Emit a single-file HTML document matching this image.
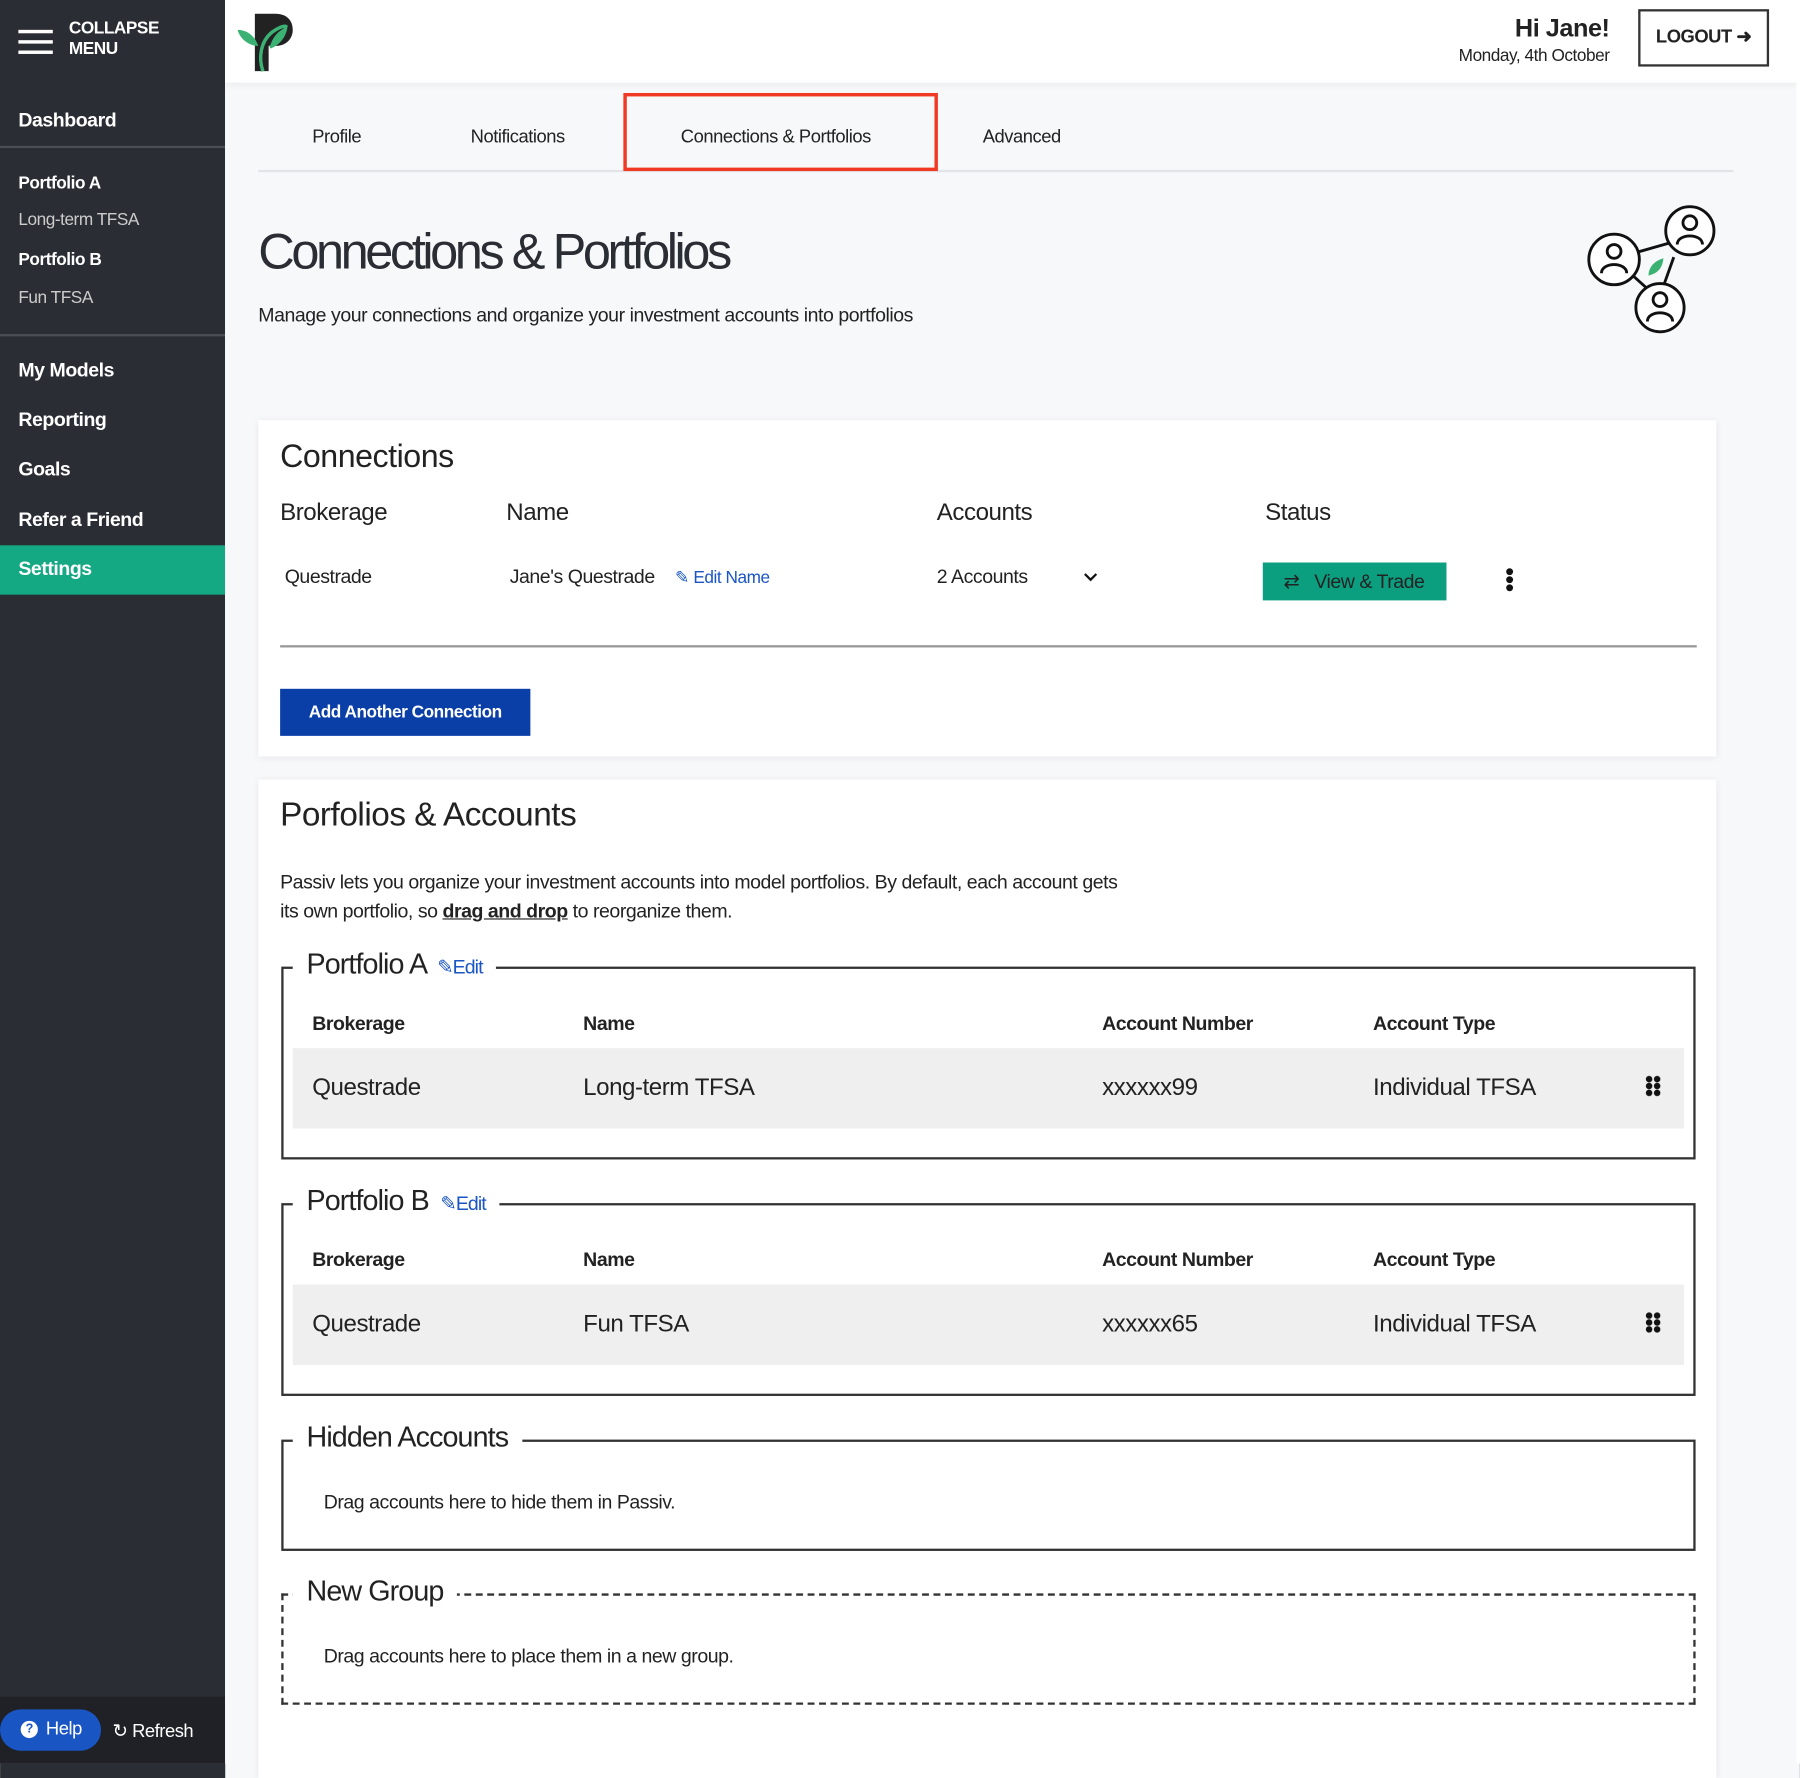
<!DOCTYPE html>
<html><head><meta charset="utf-8"><style>
*{box-sizing:border-box;margin:0;padding:0}
html,body{width:1800px;height:1763px;overflow:hidden;background:linear-gradient(90deg,#2a2d33 0,#2a2d33 225px,#f7f8fa 225px)}
#w{position:absolute;left:0;top:0;width:1568px;height:1536px;transform:scale(1.148);transform-origin:0 0;font-family:"Liberation Sans",sans-serif;color:#222;letter-spacing:-0.4px;background:#f7f8fa}
.a{position:absolute;white-space:nowrap}
#side{position:absolute;left:0;top:0;width:196px;height:1536px;background:#2a2d33;color:#fff}
.sb{font-weight:bold;font-size:17px}
.hr{position:absolute;left:0;width:196px;height:2px;background:#4a4e55}
.card{position:absolute;left:225px;width:1270px;background:#fff;box-shadow:0 1px 6px rgba(0,0,0,.08)}
.fs{position:absolute;left:245px;width:1232px;border:2px solid #333}
.lg{position:absolute;background:#fff;padding:0 12px;font-size:25px;top:-18px;left:8px;letter-spacing:-0.8px}
.row{position:absolute;left:8px;right:8px;background:#efefef;height:70px}
.th{font-weight:bold;font-size:17px}
.td{font-size:21px}
.blue{color:#1a55c4}
.dots{position:absolute;left:1178px;top:24px;width:14px;height:18px;background:radial-gradient(circle,#111 2.6px,transparent 3px) 0 0/7px 6px}
</style></head><body><div id="w">
<div id="side">
 <div class="a" style="left:16px;top:26px;width:30px;height:3px;background:#fff"></div>
 <div class="a" style="left:16px;top:35px;width:30px;height:3px;background:#fff"></div>
 <div class="a" style="left:16px;top:44px;width:30px;height:3px;background:#fff"></div>
 <div class="a" style="left:60px;top:16px;font-weight:bold;font-size:15px;line-height:18px">COLLAPSE<br>MENU</div>
 <div class="a sb" style="left:16px;top:95px">Dashboard</div>
 <div class="hr" style="top:127px"></div>
 <div class="a" style="left:16px;top:151px;font-weight:bold;font-size:15px">Portfolio A</div>
 <div class="a" style="left:16px;top:183px;font-size:15px;color:#ccc">Long-term TFSA</div>
 <div class="a" style="left:16px;top:218px;font-weight:bold;font-size:15px">Portfolio B</div>
 <div class="a" style="left:16px;top:251px;font-size:15px;color:#ccc">Fun TFSA</div>
 <div class="hr" style="top:291px"></div>
 <div class="a sb" style="left:16px;top:313px">My Models</div>
 <div class="a sb" style="left:16px;top:356px">Reporting</div>
 <div class="a sb" style="left:16px;top:399px">Goals</div>
 <div class="a sb" style="left:16px;top:443px">Refer a Friend</div>
 <div class="a" style="left:0;top:475px;width:196px;height:43px;background:#14a883"></div>
 <div class="a sb" style="left:16px;top:486px">Settings</div>
 <div class="a" style="left:0;top:1478px;width:196px;height:58px;background:#1f2126"></div>
 <div class="a" style="left:0;top:1489px;width:88px;height:36px;border-radius:18px;background:#1a55c4"></div>
 <div class="a" style="left:18px;top:1499px;width:15px;height:15px;border-radius:50%;background:#fff;color:#1a55c4;font-size:11px;font-weight:bold;text-align:center;line-height:15px">?</div>
 <div class="a" style="left:40px;top:1498px;font-size:16px">Help</div>
 <div class="a" style="left:98px;top:1498px;font-size:16px">↻ Refresh</div>
</div>
<div class="a" style="left:196px;top:0;width:1370px;height:72px;background:#fff;box-shadow:0 2px 6px rgba(0,0,0,.05)"></div>
<div class="a" style="left:1565px;top:0;width:3px;height:1536px;background:#fff"></div>
<svg class="a" style="left:205px;top:8px" width="52" height="56" viewBox="0 0 52 56">
 <path d="M17 4h18c10 0 15 6 15 14s-6 14-15 14h-6v22h-12z" fill="#222"/>
 <path d="M24 54c-4-12-2-26 8-34 4-3 10-6 12-5-1 8-6 15-14 18" fill="none" stroke="#3bb273" stroke-width="3"/>
 <path d="M30 33c2-8 7-14 14-17-1 8-6 14-14 17z" fill="#3bb273"/>
 <path d="M20 32C12 32 4 26 2 18c8 0 15 5 18 14z" fill="#3bb273"/>
</svg>
<div class="a" style="right:166px;top:12px;font-weight:bold;font-size:22px">Hi Jane!</div>
<div class="a" style="right:166px;top:40px;font-size:15px">Monday, 4th October</div>
<div class="a" style="left:1427px;top:8px;width:114px;height:50px;border:2px solid #333;font-weight:bold;font-size:16px;text-align:center;line-height:46px">LOGOUT ➜</div>
<div class="a" style="left:272px;top:111px;font-size:16px">Profile</div>
<div class="a" style="left:410px;top:111px;font-size:16px">Notifications</div>
<div class="a" style="left:593px;top:111px;font-size:16px">Connections &amp; Portfolios</div>
<div class="a" style="left:856px;top:111px;font-size:16px">Advanced</div>
<div class="a" style="left:225px;top:148px;width:1285px;height:2px;background:#e2e4e8"></div>
<div class="a" style="left:543px;top:81px;width:274px;height:68px;border:3px solid #f03a24"></div>
<div class="a" style="left:225px;top:195px;font-size:44px;letter-spacing:-3px;color:#2a2d33">Connections &amp; Portfolios</div>
<div class="a" style="left:225px;top:265px;font-size:17px">Manage your connections and organize your investment accounts into portfolios</div>
<svg class="a" style="left:1380px;top:176px" width="120" height="118" viewBox="0 0 120 118" fill="none" stroke="#111" stroke-width="2.5">
 <path d="M45 44l35-10M78 48l-10 28M40 62l20 18"/>
 <circle cx="26" cy="50" r="22" fill="#fff"/><circle cx="92" cy="25" r="21" fill="#fff"/><circle cx="66" cy="92" r="21" fill="#fff"/>
 <circle cx="26" cy="43" r="6"/><path d="M15 62c0-10 22-10 22 0"/>
 <circle cx="92" cy="18" r="6"/><path d="M81 37c0-10 22-10 22 0"/>
 <circle cx="66" cy="85" r="6"/><path d="M55 104c0-10 22-10 22 0"/>
 <path d="M56 64c0-8 6-13 13-15-1 9-5 13-13 15z" fill="#3bb273" stroke="none"/>
</svg>
<div class="card" style="top:366px;height:293px">
 <div class="a" style="left:19px;top:16px;font-size:28px">Connections</div>
 <div class="a" style="left:19px;top:69px;font-size:21px">Brokerage</div>
 <div class="a" style="left:216px;top:69px;font-size:21px">Name</div>
 <div class="a" style="left:591px;top:69px;font-size:21px">Accounts</div>
 <div class="a" style="left:877px;top:69px;font-size:21px">Status</div>
 <div class="a" style="left:23px;top:127px;font-size:17px">Questrade</div>
 <div class="a" style="left:219px;top:127px;font-size:17px">Jane's Questrade</div>
 <div class="a blue" style="left:363px;top:128px;font-size:15px">✎ Edit Name</div>
 <div class="a" style="left:591px;top:127px;font-size:17px">2 Accounts</div>
 <svg class="a" style="left:719px;top:133px" width="12" height="8" viewBox="0 0 12 8"><path d="M1 1l5 5 5-5" fill="none" stroke="#111" stroke-width="2"/></svg>
 <div class="a" style="left:875px;top:124px;width:160px;height:33px;background:#0b9f80;font-size:17px;line-height:33px;padding-left:18px">⇄&nbsp;&nbsp; View &amp; Trade</div>
 <div class="a" style="left:1087px;top:129px;width:6px;height:6px;border-radius:50%;background:#111;box-shadow:0 7px 0 #111,0 14px 0 #111"></div>
 <div class="a" style="left:19px;top:196px;width:1234px;height:2px;background:#999"></div>
 <div class="a" style="left:19px;top:234px;width:218px;height:41px;background:#0b3fa8;color:#fff;font-weight:bold;font-size:15px;text-align:center;line-height:41px">Add Another Connection</div>
</div>
<div class="card" style="top:679px;height:870px">
 <div class="a" style="left:19px;top:15px;font-size:29px">Porfolios &amp; Accounts</div>
 <div class="a" style="left:19px;top:77px;font-size:17px;line-height:25px">Passiv lets you organize your investment accounts into model portfolios. By default, each account gets<br>its own portfolio, so <b><u>drag and drop</u></b> to reorganize them.</div>
</div>
<div class="fs" style="top:842px;height:168px">
 <div class="lg">Portfolio A <span class="blue" style="font-size:17px">&nbsp;✎Edit</span></div>
 <div class="a th" style="left:25px;top:38px">Brokerage</div><div class="a th" style="left:261px;top:38px">Name</div><div class="a th" style="left:713px;top:38px">Account Number</div><div class="a th" style="left:949px;top:38px">Account Type</div>
 <div class="row" style="top:69px">
  <div class="a td" style="left:17px;top:23px">Questrade</div><div class="a td" style="left:253px;top:23px">Long-term TFSA</div><div class="a td" style="left:705px;top:23px">xxxxxx99</div><div class="a td" style="left:941px;top:23px">Individual TFSA</div>
  <div class="dots"></div>
 </div>
</div>
<div class="fs" style="top:1048px;height:168px">
 <div class="lg">Portfolio B <span class="blue" style="font-size:17px">&nbsp;✎Edit</span></div>
 <div class="a th" style="left:25px;top:38px">Brokerage</div><div class="a th" style="left:261px;top:38px">Name</div><div class="a th" style="left:713px;top:38px">Account Number</div><div class="a th" style="left:949px;top:38px">Account Type</div>
 <div class="row" style="top:69px">
  <div class="a td" style="left:17px;top:23px">Questrade</div><div class="a td" style="left:253px;top:23px">Fun TFSA</div><div class="a td" style="left:705px;top:23px">xxxxxx65</div><div class="a td" style="left:941px;top:23px">Individual TFSA</div>
  <div class="dots"></div>
 </div>
</div>
<div class="fs" style="top:1254px;height:97px">
 <div class="lg">Hidden Accounts</div>
 <div class="a" style="left:35px;top:43px;font-size:17px">Drag accounts here to hide them in Passiv.</div>
</div>
<div class="fs" style="top:1388px;height:97px;border-style:dashed">
 <div class="lg">New Group</div>
 <div class="a" style="left:35px;top:43px;font-size:17px">Drag accounts here to place them in a new group.</div>
</div>
</div></body></html>
